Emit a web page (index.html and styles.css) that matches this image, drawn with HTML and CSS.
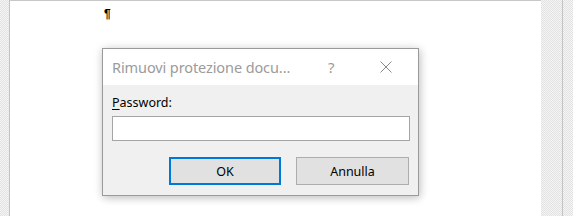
FILE: index.html
```html
<!DOCTYPE html>
<html lang="it">
<head>
<meta charset="utf-8">
<title>Rimuovi protezione documento</title>
<link rel="stylesheet" href="styles.css">
</head>
<body>
<div class="workspace">
  <div class="gutter gutter-left"></div>
  <div class="page">
    <p class="pilcrow">¶</p>
    <div class="dialog">
      <div class="titlebar">
        <span class="title">Rimuovi protezione docu...</span>
        <span class="help">?</span>
        <span class="close">
          <svg width="12" height="12" viewBox="0 0 12 12"><path d="M0.5 0.5 L11.5 11.5 M11.5 0.5 L0.5 11.5" stroke="#8a8a8a" stroke-width="1" fill="none"/></svg>
        </span>
      </div>
      <div class="content">
        <label class="label"><u>P</u>assword:</label>
        <div class="input"></div>
        <div class="buttons">
          <div class="btn btn-default">OK</div>
          <div class="btn">Annulla</div>
        </div>
      </div>
    </div>
  </div>
  <div class="gutter gutter-right"><div class="scrollline"></div></div>
</div>
</body>
</html>
```
FILE: styles.css
```css
html, body {
  margin: 0;
  padding: 0;
  width: 573px;
  height: 216px;
  overflow: hidden;
  background: #ebebeb;
}
.workspace {
  display: flex;
  height: 216px;
}
.gutter {
  background-color: #ececec;
  background-image: repeating-conic-gradient(#e3e3e3 0 25%, #f4f4f4 0 50%);
  background-size: 2px 2px;
}
.gutter-left {
  width: 9px;
  border-right: 1px solid #c3c3c3;
}
.gutter-right {
  width: 32px;
  display: flex;
  padding-left: 21px;
  box-sizing: border-box;
}
.scrollline {
  width: 1px;
  background: #c3c3c3;
}
.page {
  width: 531px;
  background: #ffffff;
  border-top: 1px solid #c8c8c8;
  padding-left: 92px;
  box-sizing: border-box;
}
.pilcrow {
  margin: 0;
  padding-top: 6px;
  padding-left: 2px;
  height: 47px;
  box-sizing: border-box;
  font-family: "Liberation Sans", Arial, sans-serif;
  font-size: 12px;
  font-weight: bold;
  line-height: 14px;
  color: #000;
}
.dialog {
  width: 317px;
  height: 148px;
  box-sizing: border-box;
  border: 1px solid #9a9a9a;
  background: #f0f0f0;
  box-shadow: 1px 2px 8px rgba(0, 0, 0, 0.22), 0 0 12px rgba(0, 0, 0, 0.06);
  font-family: "Noto Sans", "Open Sans", sans-serif;
}
.titlebar {
  height: 36px;
  background: #ffffff;
  display: flex;
  align-items: center;
  padding-left: 9px;
  color: #9b9b9b;
}
.title {
  font-size: 14.5px;
  width: 216px;
  letter-spacing: -0.1px;
}
.help {
  font-size: 15px;
  width: 52px;
}
.close {
  display: flex;
  align-items: center;
}
.content {
  padding: 9px 9px 0 9px;
}
.label {
  display: block;
  font-size: 12.5px;
  color: #000;
  line-height: 17px;
  height: 22px;
}
.label u {
  text-decoration-thickness: 1px;
  text-underline-offset: 2px;
}
.input {
  width: 298px;
  height: 25px;
  box-sizing: border-box;
  background: #fff;
  border: 1px solid #a5a5a5;
}
.buttons {
  display: flex;
  justify-content: flex-end;
  gap: 15px;
  margin-top: 16px;
}
.btn {
  width: 113px;
  height: 28px;
  box-sizing: border-box;
  border: 1px solid #adadad;
  background: #e1e1e1;
  display: flex;
  align-items: center;
  justify-content: center;
  font-size: 12.5px;
  color: #000;
}
.btn-default {
  width: 112px;
  border: 2px solid #0078d7;
}
```
